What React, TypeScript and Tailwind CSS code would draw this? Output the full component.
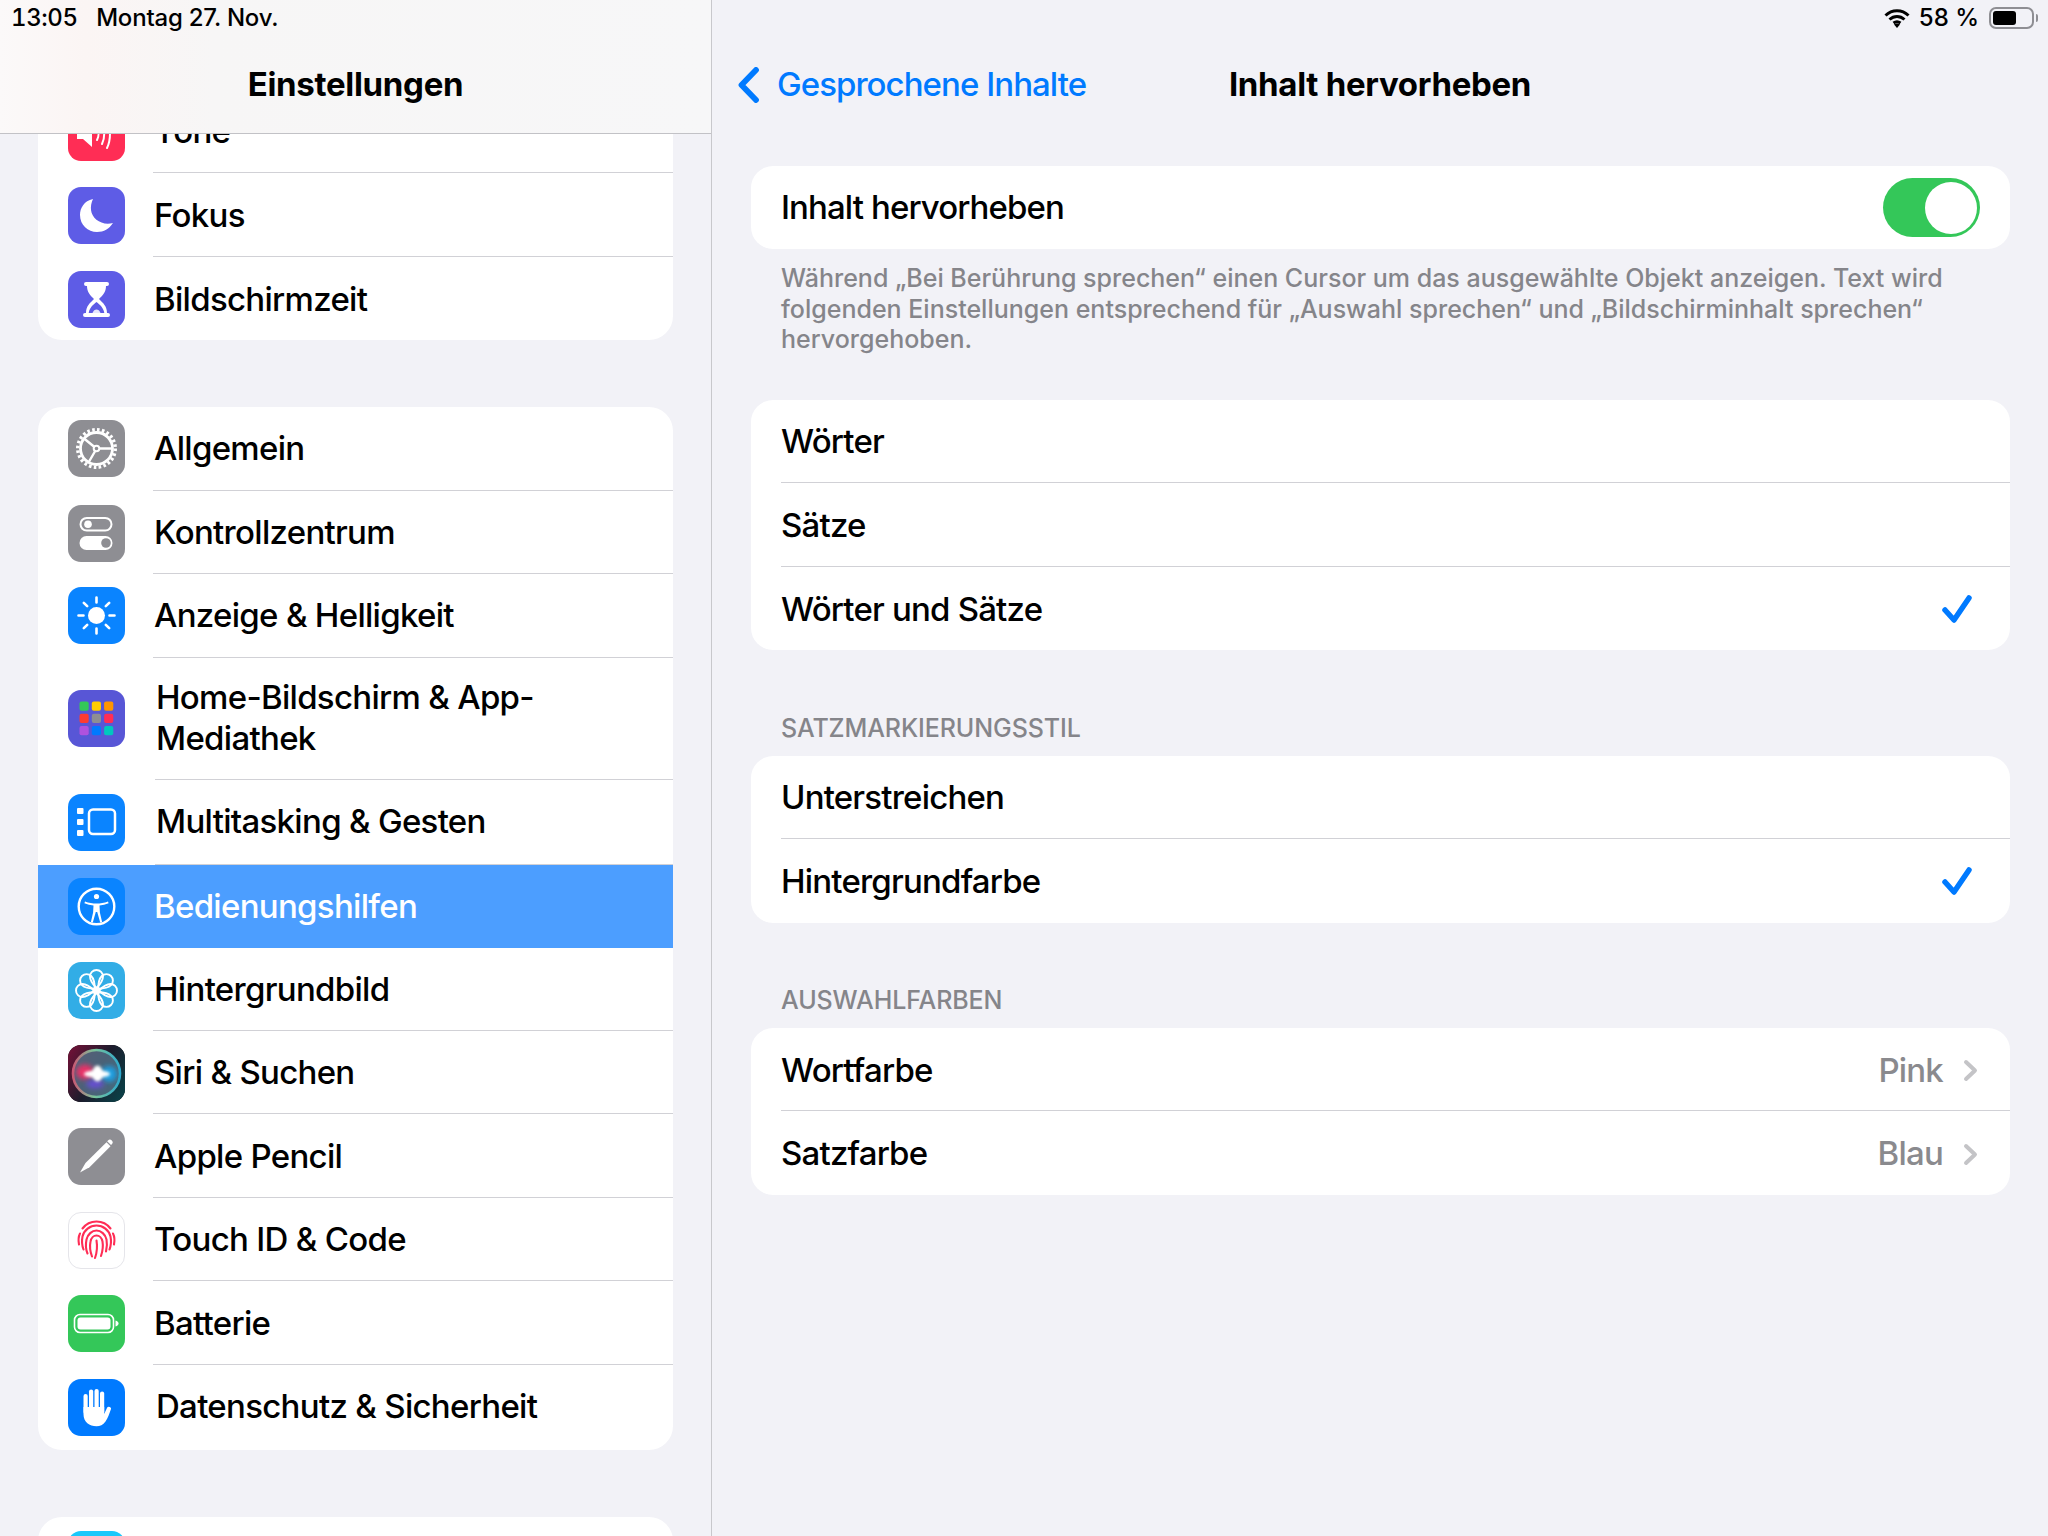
import React from 'react';

const IconBox = ({ className, children }: { className: string; children: React.ReactNode }) => (
  <div className={`w-[57px] h-[57px] rounded-[13px] shrink-0 overflow-hidden ${className}`}>
    <svg viewBox="0 0 57 57" className="w-[57px] h-[57px] block">
      {children}
    </svg>
  </div>
);

const SoundIcon = () => (
  <IconBox className="bg-[#ff2d55]">
    <path d="M9 24h6l9-8v27l-9-8H9z" fill="#fff" />
    <path d="M29 23c2 4 2 9 0 13M34 19c3 6 3 15 0 21M39 15c4 8 4 21 0 29" fill="none" stroke="#fff" strokeWidth="2" strokeLinecap="round" />
  </IconBox>
);

const MoonIcon = () => (
  <IconBox className="bg-[#5e5ce6]">
    <path d="M25 12C16 14 12 21 12 28c0 10 8 17 17 17 7 0 12-3 16-9-11 3-21-4-22-13-.5-4 .5-8 2-11z" fill="#fff" />
  </IconBox>
);

const HourglassIcon = () => (
  <IconBox className="bg-[#5e5ce6]">
    <path d="M18 11h21a1.5 1.5 0 0 1 0 4h-1c0 6-3 9-7 13 4 4 8 7 8 14h1a1.5 1.5 0 0 1 0 4H17a1.5 1.5 0 0 1 0-4h1c0-7 4-10 8-14-4-4-7-7-7-13h-1a1.5 1.5 0 0 1 0-4z" fill="#fff" />
    <path d="M28.5 31c-3.500 3-7 5.500-7.800 11h15.600c-.8-5.500-4.300-8-7.800-11z" fill="#5e5ce6" />
    <path d="M24.500 42c.8-2.500 2.500-3.500 4-3.500s3.200 1 4 3.500z" fill="#fff" opacity="0.85" />
  </IconBox>
);

const GearIcon = () => (
  <IconBox className="bg-[#8e8e93]">
    <circle cx="28.5" cy="28.500" r="18.800" fill="none" stroke="#fff" strokeWidth="3.400" strokeDasharray="2.600 2.320" />
    <circle cx="28.5" cy="28.500" r="16" fill="none" stroke="#fff" strokeWidth="2.800" />
    <circle cx="28.5" cy="28.500" r="2.800" fill="none" stroke="#fff" strokeWidth="2" />
    <path d="M26.200 26.800L16 18.500M31.300 28.500H44M27.200 31L20.500 42.500" fill="none" stroke="#fff" strokeWidth="2.400" />
  </IconBox>
);

const ControlIcon = () => (
  <IconBox className="bg-[#8e8e93]">
    <rect x="12.500" y="13" width="31" height="12.500" rx="6.250" fill="none" stroke="#fff" strokeWidth="2" />
    <circle cx="20" cy="19.200" r="3.800" fill="#fff" />
    <rect x="11.500" y="31" width="33" height="14" rx="7" fill="#fff" />
    <circle cx="38" cy="38" r="4.800" fill="#8e8e93" />
  </IconBox>
);

const SunIcon = () => (
  <IconBox className="bg-[#0a84ff]">
    <circle cx="28.500" cy="28.500" r="8.500" fill="#fff" />
    <path d="M28.500 10.500v5M28.500 41.500v5M10.500 28.500h5M41.500 28.500h5M15.800 15.800l3.400 3.400M37.800 37.800l3.400 3.400M15.800 41.200l3.400-3.400M37.800 19.200l3.400-3.400" stroke="#fff" strokeWidth="2.600" strokeLinecap="round" />
  </IconBox>
);

const homeDots = [
  ['#34c759', '#ffcc00', '#ff9500'],
  ['#ff3b30', '#8e8e93', '#ff2d55'],
  ['#af52de', '#007aff', '#00c7be'],
];

const HomeIcon = () => (
  <IconBox className="bg-[#5856d6]">
    {homeDots.map((row, y) =>
      row.map((fill, x) => (
        <rect key={`${x}-${y}`} x={11.500 + x * 12.300} y={11.500 + y * 12.300} width="9.200" height="9.200" rx="2" fill={fill} />
      ))
    )}
  </IconBox>
);

const MultitaskIcon = () => (
  <IconBox className="bg-[#0a84ff]">
    <rect x="9" y="14" width="6.500" height="6" rx="1" fill="#fff" />
    <rect x="9" y="25" width="6.500" height="6" rx="1" fill="#fff" />
    <rect x="9" y="36" width="6.500" height="6" rx="1" fill="#fff" />
    <rect x="21" y="15.500" width="26" height="24.500" rx="4" fill="none" stroke="#fff" strokeWidth="2.500" />
  </IconBox>
);

const AccessIcon = () => (
  <IconBox className="bg-[#0a84ff]">
    <circle cx="28.500" cy="28.500" r="17.800" fill="none" stroke="#fff" strokeWidth="2.400" />
    <circle cx="28.500" cy="18.500" r="2.600" fill="#fff" />
    <path d="M17 23.500c4 1.500 7.500 2 11.500 2s7.500-.5 11.500-2l.6 1.800c-3 1.200-6 2-9.100 2.300l.4 7 2.200 9.400-1.900.5-3-10.500h-1.400l-3 10.500-1.900-.5 2.200-9.400.4-7c-3.100-.3-6.100-1.100-9.100-2.300z" fill="#fff" />
  </IconBox>
);

const FlowerIcon = () => (
  <IconBox className="bg-[#32ade6]">
    {[0, 45, 90, 135, 180, 225, 270, 315].map((r) => (
      <path
        key={r}
        transform={`rotate(${r} 28.500 28.500)`}
        d="M28.500 26C24 21.500 22 18.500 22 14.500a6.500 6.500 0 0 1 13 0C35 18.500 33 21.500 28.500 26z"
        fill="none"
        stroke="#fff"
        strokeWidth="1.900"
      />
    ))}
    <circle cx="28.500" cy="28.500" r="3" fill="#fff" />
  </IconBox>
);

const SiriIcon = () => (
  <IconBox className="bg-[#111]">
    <defs>
      <linearGradient id="siriBg" x1="0" y1="0.200" x2="1" y2="0.800">
        <stop offset="0" stopColor="#6a1236" />
        <stop offset="0.5" stopColor="#1c1c2c" />
        <stop offset="1" stopColor="#0b3f46" />
      </linearGradient>
      <linearGradient id="siriRing" x1="0" y1="0.500" x2="1" y2="0.500">
        <stop offset="0" stopColor="#c85a74" />
        <stop offset="0.45" stopColor="#79c49a" />
        <stop offset="1" stopColor="#2fa8cc" />
      </linearGradient>
      <filter id="siriBlur" x="-50%" y="-50%" width="200%" height="200%">
        <feGaussianBlur stdDeviation="2.400" />
      </filter>
      <filter id="siriBlurSmall" x="-80%" y="-80%" width="260%" height="260%">
        <feGaussianBlur stdDeviation="1.600" />
      </filter>
    </defs>
    <rect width="57" height="57" fill="url(#siriBg)" />
    <circle cx="28.500" cy="28.500" r="24" fill="#56738a" opacity="0.8" />
    <circle cx="28.500" cy="28.500" r="23.500" fill="none" stroke="url(#siriRing)" strokeWidth="2.600" />
    <ellipse cx="17" cy="27" rx="9" ry="7.500" fill="#e83068" filter="url(#siriBlur)" />
    <ellipse cx="41" cy="29" rx="8" ry="8" fill="#1f9ee0" filter="url(#siriBlur)" />
    <ellipse cx="27" cy="39" rx="9" ry="4.500" fill="#6650d0" filter="url(#siriBlur)" />
    <ellipse cx="29" cy="29" rx="13" ry="3.600" fill="#fff" filter="url(#siriBlurSmall)" />
    <ellipse cx="29.500" cy="28.500" rx="5" ry="8" fill="#fff" filter="url(#siriBlurSmall)" />
  </IconBox>
);

const PencilIcon = () => (
  <IconBox className="bg-[#8e8e93]">
    <path d="M12 44.500l5.500-9.500 21-20.800 4 4-21 21z" fill="#fff" />
    <path d="M40 12.500a2.700 2.700 0 0 1 3.800 0 2.700 2.700 0 0 1 0 3.800l-.8.800-3.800-3.800z" fill="#fff" />
  </IconBox>
);

const TouchIcon = () => (
  <IconBox className="bg-white border-[1.5px] border-[#e5e5ea]">
    <g transform="translate(-1.500 -1.500)" fill="none" stroke="#ff2d55" strokeWidth="2.100" strokeLinecap="round">
      <path d="M15 17c3-4 8.500-7 14-7s11 3 14 7" />
      <path d="M11.500 33c-.8-4-.5-8 1-11M46.500 33c.8-4 .5-8-1-11" />
      <path d="M16 38c-1.500-4-2-8-1-13 1.500-6.500 7.500-11 14-11s12.500 4.500 14 11c1 5 .5 9-1 13" />
      <path d="M20 42c-1.500-3.500-2-9-1-14 1-5 5.500-9 10-9s9 4 10 9c.8 4 .5 8-.5 12" />
      <path d="M24.500 45c-1.500-4-2.500-10-1.500-15 .6-3.500 3.200-6 6-6s5.400 2.500 6 6c.8 4.500 0 10-1.500 14.500" />
      <path d="M29 29c1 6 .5 12-1.500 17.500" />
    </g>
  </IconBox>
);

const BatteryIcon = () => (
  <IconBox className="bg-[#34c759]">
    <rect x="6.500" y="19.500" width="39" height="18" rx="5.500" fill="none" stroke="#fff" strokeWidth="1.600" />
    <rect x="9.500" y="22.500" width="33" height="12" rx="3" fill="#fff" />
    <path d="M47.500 25.500c2 .5 3 1.700 3 3s-1 2.500-3 3z" fill="#fff" />
  </IconBox>
);

const HandIcon = () => (
  <IconBox className="bg-[#007aff]">
    <rect x="15.500" y="15" width="4.200" height="20" rx="2.100" fill="#fff" />
    <rect x="21" y="10.500" width="4.200" height="22" rx="2.100" fill="#fff" />
    <rect x="26.500" y="10" width="4.200" height="22" rx="2.100" fill="#fff" />
    <rect x="32" y="12.500" width="4.200" height="22" rx="2.100" fill="#fff" />
    <path d="M15.500 28h20.700v7l3-6.500c.8-1.600 4.500-.5 3.800 1.500-2 5.500-3 9-5.500 12.500-2.500 3.500-5.500 4.800-9 4.800-7 0-13-4-13-12z" fill="#fff" />
  </IconBox>
);

type SideRow = {
  label: React.ReactNode;
  icon: React.ReactNode;
  height: string;
  wide?: boolean;
  low?: boolean;
  active?: boolean;
  last?: boolean;
};

const topRows: SideRow[] = [
  { label: 'Töne', icon: <SoundIcon />, height: 'h-[83.5px]', low: true },
  { label: 'Fokus', icon: <MoonIcon />, height: 'h-[83.5px]', low: true },
  { label: 'Bildschirmzeit', icon: <HourglassIcon />, height: 'h-[83.5px]', low: true, last: true },
];

const mainRows: SideRow[] = [
  { label: 'Allgemein', icon: <GearIcon />, height: 'h-[83.5px]' },
  { label: 'Kontrollzentrum', icon: <ControlIcon />, height: 'h-[83.5px]', low: true },
  { label: 'Anzeige & Helligkeit', icon: <SunIcon />, height: 'h-[83.5px]' },
  {
    label: (
      <>
        Home-Bildschirm &amp; App-
        <br />
        Mediathek
      </>
    ),
    icon: <HomeIcon />,
    height: 'h-[122px]',
    wide: true,
  },
  { label: 'Multitasking & Gesten', icon: <MultitaskIcon />, height: 'h-[85.5px]', wide: true },
  { label: 'Bedienungshilfen', icon: <AccessIcon />, height: 'h-[83px]', active: true },
  { label: 'Hintergrundbild', icon: <FlowerIcon />, height: 'h-[83px]', low: true },
  { label: 'Siri & Suchen', icon: <SiriIcon />, height: 'h-[83px]', low: true },
  { label: 'Apple Pencil', icon: <PencilIcon />, height: 'h-[83.5px]', low: true },
  { label: 'Touch ID & Code', icon: <TouchIcon />, height: 'h-[83.5px]', low: true },
  { label: 'Batterie', icon: <BatteryIcon />, height: 'h-[83.5px]', low: true },
  { label: 'Datenschutz & Sicherheit', icon: <HandIcon />, height: 'h-[85px]', wide: true, last: true },
];

const SidebarRow = ({ row }: { row: SideRow }) => (
  <div className={`flex items-center pl-[30px] ${row.height} ${row.low ? 'pt-[2px]' : ''} ${row.active ? 'bg-[#4c9eff]' : ''}`}>
    {row.icon}
    <div
      className={`flex-1 h-full flex items-center text-[33px] leading-[41.5px] font-[450] tracking-[-0.7px] ${row.wide ? 'ml-[30px] pl-[1px]' : 'ml-[28px] pl-[1px]'} ${
        row.active ? 'text-white' : 'text-black'
      } ${row.last || row.active ? '' : 'border-b-[1.5px] border-[#d1d1d6]'}`}
    >
      <span>{row.label}</span>
    </div>
  </div>
);

const Check = () => (
  <svg viewBox="0 0 30 29" className="w-[30px] h-[29px] mr-[8px]">
    <path d="M3 15l9 10L27 3" fill="none" stroke="#007aff" strokeWidth="5.500" strokeLinecap="round" strokeLinejoin="round" />
  </svg>
);

const Chevron = () => (
  <svg viewBox="0 0 15 23" className="w-[15px] h-[23px] ml-[20px] mr-[2px]">
    <path d="M3 3l9 8.500-9 8.500" fill="none" stroke="#c4c4c7" strokeWidth="4" strokeLinecap="round" strokeLinejoin="round" />
  </svg>
);

const DetailRow = ({ label, right, last }: { label: string; right?: React.ReactNode; last?: boolean }) => (
  <div className="h-[83.33px] pl-[30px]">
    <div className={`h-full pt-[2px] flex items-center justify-between pr-[30px] text-[33px] font-[450] tracking-[-0.8px] text-black ${last ? '' : 'border-b-[1.5px] border-[#d1d1d6]'}`}>
      <span>{label}</span>
      {right}
    </div>
  </div>
);

const Value = ({ text }: { text: string }) => (
  <div className="flex items-center">
    <span className="text-[#8a8a8e]">{text}</span>
    <Chevron />
  </div>
);

const SectionTitle = ({ text, className }: { text: string; className: string }) => (
  <div className={`pl-[30px] text-[25px] leading-[30px] font-[450] tracking-[-0.1px] text-[#85858a] ${className}`}>{text}</div>
);

export default function App() {
  return (
    <div className="w-[2048px] h-[1536px] overflow-hidden flex bg-[#f2f2f7] font-[Inter,sans-serif]">
      {/* left column */}
      <aside className="relative w-[712px] h-full shrink-0 border-r-[1.5px] border-[#c8c8cc] overflow-hidden">
        <div className="absolute top-0 left-0 right-0 h-[133.500px] z-10 border-b-[1.5px] border-[#c2c2c6] bg-[linear-gradient(90deg,#fbf9f9_0%,#fbf5f4_12%,#f7f6f6_30%,#f7f7f8_100%)]">
          <div className="h-[36px] flex items-center pl-[11px] text-[24px] font-medium text-black">
            <span className="tabular-nums tracking-[-0.4px]">13:05</span>
            <span className="ml-[18.500px] tracking-[-0.2px]">Montag 27. Nov.</span>
          </div>
          <div className="h-[97px] flex items-center justify-center text-[33px] font-bold tracking-[-0.3px] text-black">
            Einstellungen
          </div>
        </div>

        <div className="pt-[89.500px] pl-[38px] pr-[38px]">
          <div className="bg-white rounded-[24px] overflow-hidden">
            {topRows.map((row, i) => (
              <SidebarRow key={i} row={row} />
            ))}
          </div>
          <div className="bg-white rounded-[24px] overflow-hidden mt-[67px]">
            {mainRows.map((row, i) => (
              <SidebarRow key={i} row={row} />
            ))}
          </div>
          <div className="bg-white rounded-[24px] overflow-hidden mt-[67px] h-[84px] pl-[30px] pt-[14px]">
            <div className="w-[57px] h-[57px] rounded-[13px] bg-[#1ac8fa]" />
          </div>
        </div>
      </aside>

      {/* right column */}
      <main className="flex-1 min-w-0 h-full">
        <div className="h-[36px] flex items-center justify-end pr-[10px]">
          <svg viewBox="0 0 26 20" className="w-[26px] h-[20px] mr-[9px]">
            <path d="M1.500 7.500C8 1 18 1 24.500 7.500M5.500 11.500C10 7.500 16 7.500 20.500 11.500M9.500 15c2-1.500 5-1.500 7 0" fill="none" stroke="#000" strokeWidth="3" />
            <path d="M13 20l-3-3.500c1.800-1.200 4.200-1.200 6 0z" fill="#000" />
          </svg>
          <span className="text-[24px] font-medium text-black">58 %</span>
          <div className="ml-[10px] w-[45px] h-[22px] rounded-[7px] border-[2px] border-[#8e8e93] p-[2px]">
            <div className="w-[23px] h-full rounded-[3px] bg-black" />
          </div>
          <div className="ml-[2px] w-[2px] h-[8px] rounded-r-full bg-[#8e8e93]" />
        </div>
        <div className="relative h-[97px] flex items-center justify-center text-[33px]">
          <div className="absolute left-[25px] top-0 h-full flex items-center text-[#007aff] font-[450] tracking-[-0.95px]">
            <svg viewBox="0 0 24 36" className="w-[24px] h-[36px]">
              <path d="M19 3L4.500 18 19 33" fill="none" stroke="#007aff" strokeWidth="5.800" strokeLinecap="round" strokeLinejoin="round" />
            </svg>
            <span className="ml-[16px]">Gesprochene Inhalte</span>
          </div>
          <span className="font-bold tracking-[-0.3px] text-black">Inhalt hervorheben</span>
        </div>

        <div className="pt-[33px] pl-[39px] pr-[38px]">
          <div className="bg-white rounded-[22px] overflow-hidden h-[83px] flex items-center justify-between pl-[30px] pr-[30px] text-[33px] font-[450] tracking-[-0.9px] text-black">
            <span>Inhalt hervorheben</span>
            <div className="w-[97px] h-[59px] rounded-full bg-[#34c759] flex items-center justify-end pr-[3.500px]">
              <div className="w-[52px] h-[52px] rounded-full bg-white" />
            </div>
          </div>
          <p className="pl-[30px] pt-[14px] text-[25px] leading-[30.500px] font-[450] tracking-[0px] text-[#85858a]">
            Während „Bei Berührung sprechen“ einen Cursor um das ausgewählte Objekt anzeigen. Text wird
            <br />
            folgenden Einstellungen entsprechend für „Auswahl sprechen“ und „Bildschirminhalt sprechen“
            <br />
            hervorgehoben.
          </p>

          <div className="bg-white rounded-[22px] overflow-hidden mt-[45.500px]">
            <DetailRow label="Wörter" />
            <DetailRow label="Sätze" />
            <DetailRow label="Wörter und Sätze" right={<Check />} last />
          </div>

          <SectionTitle text="SATZMARKIERUNGSSTIL" className="mt-[63px]" />
          <div className="bg-white rounded-[22px] overflow-hidden mt-[13px]">
            <DetailRow label="Unterstreichen" />
            <DetailRow label="Hintergrundfarbe" right={<Check />} last />
          </div>

          <SectionTitle text="AUSWAHLFARBEN" className="mt-[62.500px]" />
          <div className="bg-white rounded-[22px] overflow-hidden mt-[13px]">
            <DetailRow label="Wortfarbe" right={<Value text="Pink" />} />
            <DetailRow label="Satzfarbe" right={<Value text="Blau" />} last />
          </div>
        </div>
      </main>
    </div>
  );
}
